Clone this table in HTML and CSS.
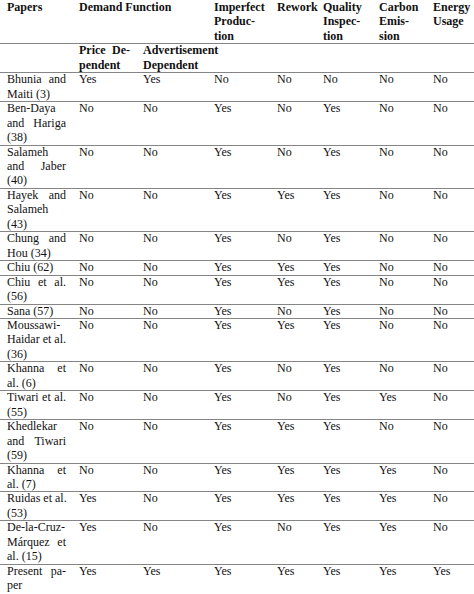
FILE: index.html
```html
<!DOCTYPE html>
<html>
<head>
<meta charset="utf-8">
<link rel="stylesheet" href="styles.css">
</head>
<body>
<table class="tbl">
  <colgroup>
    <col class="c1"><col class="c2"><col class="c3"><col class="c4"><col class="c5"><col class="c6"><col class="c7"><col class="c8">
  </colgroup>
  <thead>
    <tr class="head first">
      <th class="paper">Papers</th>
      <th colspan="2">Demand Function</th>
      <th>Imperfect<br>Produc-<br>tion</th>
      <th>Rework</th>
      <th>Quality<br>Inspec-<br>tion</th>
      <th>Carbon<br>Emis-<br>sion</th>
      <th>Energy<br>Usage</th>
    </tr>
    <tr class="head">
      <th class="paper"></th>
      <th><span class="j">Price De-</span>pendent</th>
      <th>Advertisement<br>Dependent</th>
      <th></th><th></th><th></th><th></th><th></th>
    </tr>
  </thead>
  <tbody>
    <tr><td class="paper"><span class="j">Bhunia and</span>Maiti (3)</td><td>Yes</td><td>Yes</td><td>No</td><td>No</td><td>No</td><td>No</td><td>No</td></tr>
    <tr><td class="paper">Ben-Daya<span class="j">and Hariga</span>(38)</td><td>No</td><td>No</td><td>Yes</td><td>No</td><td>Yes</td><td>No</td><td>No</td></tr>
    <tr><td class="paper">Salameh<span class="j">and Jaber</span>(40)</td><td>No</td><td>No</td><td>Yes</td><td>No</td><td>Yes</td><td>No</td><td>No</td></tr>
    <tr><td class="paper"><span class="j">Hayek and</span>Salameh<br>(43)</td><td>No</td><td>No</td><td>Yes</td><td>Yes</td><td>Yes</td><td>No</td><td>No</td></tr>
    <tr><td class="paper"><span class="j">Chung and</span>Hou (34)</td><td>No</td><td>No</td><td>Yes</td><td>No</td><td>Yes</td><td>No</td><td>No</td></tr>
    <tr><td class="paper">Chiu (62)</td><td>No</td><td>No</td><td>Yes</td><td>Yes</td><td>Yes</td><td>No</td><td>No</td></tr>
    <tr><td class="paper"><span class="j">Chiu et al.</span>(56)</td><td>No</td><td>No</td><td>Yes</td><td>Yes</td><td>Yes</td><td>No</td><td>No</td></tr>
    <tr><td class="paper">Sana (57)</td><td>No</td><td>No</td><td>Yes</td><td>No</td><td>Yes</td><td>No</td><td>No</td></tr>
    <tr><td class="paper">Moussawi-<span class="j">Haidar et al.</span>(36)</td><td>No</td><td>No</td><td>Yes</td><td>Yes</td><td>Yes</td><td>No</td><td>No</td></tr>
    <tr><td class="paper"><span class="j">Khanna et</span>al. (6)</td><td>No</td><td>No</td><td>Yes</td><td>No</td><td>Yes</td><td>No</td><td>No</td></tr>
    <tr><td class="paper"><span class="j">Tiwari et al.</span>(55)</td><td>No</td><td>No</td><td>Yes</td><td>No</td><td>Yes</td><td>Yes</td><td>No</td></tr>
    <tr><td class="paper">Khedlekar<span class="j">and Tiwari</span>(59)</td><td>No</td><td>No</td><td>Yes</td><td>Yes</td><td>Yes</td><td>No</td><td>No</td></tr>
    <tr><td class="paper"><span class="j">Khanna et</span>al. (7)</td><td>No</td><td>No</td><td>Yes</td><td>Yes</td><td>Yes</td><td>Yes</td><td>No</td></tr>
    <tr><td class="paper"><span class="j">Ruidas et al.</span>(53)</td><td>Yes</td><td>No</td><td>Yes</td><td>Yes</td><td>Yes</td><td>Yes</td><td>No</td></tr>
    <tr><td class="paper">De-la-Cruz-<span class="j">Márquez et</span>al. (15)</td><td>Yes</td><td>No</td><td>Yes</td><td>No</td><td>Yes</td><td>Yes</td><td>No</td></tr>
    <tr><td class="paper"><span class="j">Present pa-</span>per</td><td>Yes</td><td>Yes</td><td>Yes</td><td>Yes</td><td>Yes</td><td>Yes</td><td>Yes</td></tr>
  </tbody>
</table>
</body>
</html>
```

FILE: styles.css
```css
html, body {
  margin: 0;
  padding: 0;
  background: #ffffff;
}

body {
  font-family: "Liberation Serif", "Times New Roman", serif;
  font-size: 12px;
  line-height: 14.45px;
  color: #111111;
}

.tbl {
  width: 474px;
  table-layout: fixed;
  border-collapse: collapse;
  border-spacing: 0;
}

.c1 { width: 72.5px; }
.c2 { width: 64px; }
.c3 { width: 71px; }
.c4 { width: 63px; }
.c5 { width: 46px; }
.c6 { width: 56px; }
.c7 { width: 54px; }
.c8 { width: 47.5px; }

.tbl th,
.tbl td {
  padding: 0 6.5px;
  vertical-align: top;
  text-align: left;
  white-space: nowrap;
  box-shadow: inset 0 1px 0 #858585;
}

.tbl th {
  font-weight: bold;
}

.tbl .head.first th {
  box-shadow: none;
}

.tbl .paper {
  padding-left: 7px;
}

.j {
  display: block;
  text-align: justify;
  text-align-last: justify;
  white-space: nowrap;
}
```
